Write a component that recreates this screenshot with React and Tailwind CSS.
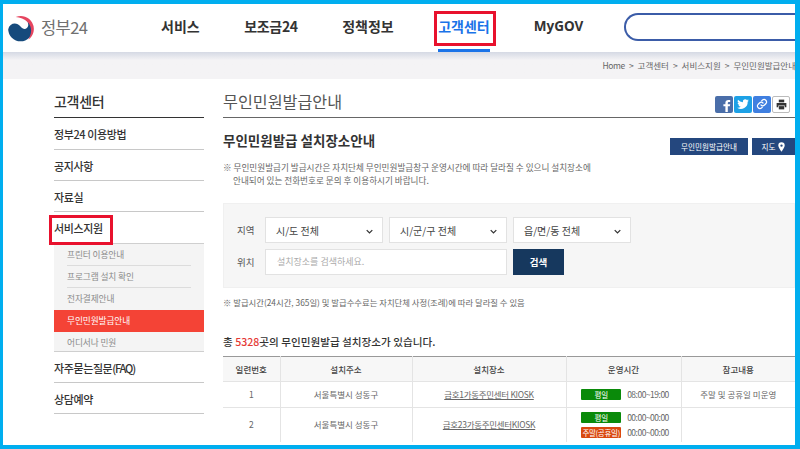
import React from "react";

const Chevron = () => (
  <svg viewBox="0 0 10 6" className="absolute right-[9px] top-[11px] w-[7px] h-[5px]" fill="none" stroke="#333" strokeWidth="1.8"><path d="M1 1l4 4 4-4" /></svg>
);
function Sel({ label, w }) {
  return (
    <div className={`relative ${w} h-[26px] bg-white border border-[#e2e2e2] flex items-center pl-[10px] text-[10px] text-[#444]`}>
      {label}
      <Chevron />
    </div>
  );
}
function Side({ label, line = true, cls = "h-[31px]" }) {
  return (
    <div className={`${cls} flex items-center pt-[2px] text-[11px] font-medium tracking-[-0.4px] text-[#333] ${line ? "border-b border-[#c8c8c8]" : ""}`}>{label}</div>
  );
}
function Sub({ label, active, line }) {
  return (
    <div className={`h-[22px] flex items-center text-[8.700px] tracking-[-0.1px] ${active ? "bg-[#f44336] text-white pl-[13px]" : "text-[#8a8a8a] mx-[13px]"} ${line ? "border-b border-[#dcdcdc]" : ""}`}>{label}</div>
  );
}
function Badge({ label, c }) {
  return <span className={`w-[40px] h-[11px] flex items-center justify-center rounded-[1px] text-[7.500px] text-white tracking-[-0.3px] ${c}`}>{label}</span>;
}
function Time({ label, c, t }) {
  return (
    <div className="flex items-center justify-center gap-[6px] pl-[3px]">
      <Badge label={label} c={c} />
      <span className="text-[8.500px] tracking-[-0.5px] text-[#666]">{t}</span>
    </div>
  );
}

export default function App() {
  return (
    <div className="relative w-[800px] h-[449px] overflow-hidden bg-white" style={{ fontFamily: '"Noto Sans CJK KR","Noto Sans",sans-serif' }}>
      {/* header */}
      <header className="h-[52px] bg-white flex items-center pl-[8px] relative">
        <svg viewBox="0 0 28 28" className="w-[27px] h-[27px] mt-[4px] shrink-0">
          <circle cx="13" cy="14.500" r="12.800" fill="#164a7c" />
          <path d="M0 15C2 8 9 7 13 12C15.500 15.500 20 15.500 21 11C21.500 6 17 2 13 1L0 0Z" fill="#fff" />
          <path d="M8 2.200A13.400 13.400 0 0 1 21 25.500C25 19 25 12 20.500 7.500C17 4 12.500 2.500 8 2.200Z" fill="#e6455f" />
        </svg>
        <span className="w-[46px] text-[16.500px] text-[#707070] ml-[6px] tracking-[-0.6px] mt-[2px] whitespace-nowrap shrink-0">정부24</span>
        <nav className="flex items-center text-[14px] font-bold text-[#333] h-full shrink-0">
          <span className="ml-[74px] w-[38px] text-center whitespace-nowrap">서비스</span>
          <span className="ml-[45px] w-[54px] text-center whitespace-nowrap tracking-[-0.3px]">보조금24</span>
          <span className="ml-[44px] w-[52px] text-center whitespace-nowrap">정책정보</span>
          <span className="ml-[44px] w-[52px] h-full flex items-center justify-center whitespace-nowrap text-[#1a73e8] border-b-[3px] border-[#1a73e8] pt-[3px]">고객센터</span>
          <span className="ml-[45px] w-[47px] flex justify-center whitespace-nowrap text-[13.500px]" style={{ fontFamily: '"Noto Sans",sans-serif' }}>MyGOV</span>
        </nav>
        <div className="ml-[42px] w-[200px] h-[28px] mt-[1px] border-2 border-r-0 border-[#3b5ca8] rounded-l-[14px] shrink-0" />
      </header>
      {/* breadcrumb */}
      <div className="h-[27px] flex items-center justify-end pr-[4px] text-[8.500px] text-[#666] whitespace-nowrap bg-gradient-to-b from-[#d5d9e4] via-[#f4f3f5] via-30% to-[#f4f3f5]">
        <span className="tracking-[-0.4px]">Home</span><span className="mx-[4px]">&gt;</span><span>고객센터</span><span className="mx-[4px]">&gt;</span><span>서비스지원</span><span className="mx-[4px]">&gt;</span><span>무인민원발급안내</span>
      </div>
      <div className="flex pl-[54px]">
        {/* sidebar */}
        <aside className="w-[150px] shrink-0">
          <div className="h-[39px] border-b border-[#333] flex items-center text-[14px] font-medium tracking-[-0.3px] text-[#333] pt-[6px]">고객센터</div>
          <Side label="정부24 이용방법" cls="h-[32px]" />
          <Side label="공지사항" />
          <Side label="자료실" />
          <Side label="서비스지원" cls="h-[31px]" line={false} />
          <div className="bg-[#f4f4f4] border-t border-b border-[#cfcfcf] h-[109px]">
            <Sub label="프린터 이용안내" line />
            <Sub label="프로그램 설치 확인" line />
            <Sub label="전자결제안내" />
            <Sub label="무인민원발급안내" active />
            <Sub label="어디서나 민원" />
          </div>
          <Side label={<>자주묻는질문<span className="tracking-[-1.200px]">(FAQ)</span></>} />
          <Side label="상담예약" />
        </aside>
        {/* main */}
        <main className="ml-[19px] w-[572px] shrink-0">
          <div className="h-[39px] border-b border-[#666] flex items-center justify-between pt-[6px] pr-[5px] text-[16.200px] text-[#555]">
            <span>무인민원발급안내</span>
            <div className="flex gap-[1px] mt-[6px]">
              <span className="w-[18px] h-[17px] rounded-[2px] bg-[#4a6ea9] flex items-end justify-end pr-[2px] text-white">
                <svg viewBox="0 0 10 16" className="w-[8px] h-[15px]" fill="#fff"><path d="M3 16V9H0.500V6.500H3V4.500C3 2 4.500 1 6.500 1H9V3.500H7.500C6.500 3.500 6 4 6 5V6.500H9L8.500 9H6V16z" /></svg>
              </span>
              <span className="w-[18px] h-[17px] rounded-[2px] bg-[#1da1e6] flex items-center justify-center">
                <svg viewBox="0 0 24 24" className="w-[14px] h-[14px]" fill="#fff"><path d="M22 5.900c-.7.3-1.500.5-2.400.6.900-.5 1.500-1.300 1.800-2.300-.8.5-1.700.8-2.600 1a4.100 4.100 0 0 0-7 3.700A11.600 11.600 0 0 1 3.400 4.700a4.100 4.100 0 0 0 1.300 5.500c-.7 0-1.300-.2-1.900-.5 0 2 1.400 3.700 3.300 4.100-.6.200-1.200.2-1.800.1.500 1.600 2 2.800 3.800 2.800A8.200 8.200 0 0 1 2 18.400 11.600 11.600 0 0 0 20 8.100c.8-.6 1.500-1.300 2-2.200z" /></svg>
              </span>
              <span className="w-[18px] h-[17px] rounded-[2px] bg-[#3f7fe0] flex items-center justify-center">
                <svg viewBox="0 0 24 24" className="w-[12px] h-[12px]" fill="none" stroke="#fff" strokeWidth="2.400" strokeLinecap="round"><path d="M10 14a5 5 0 0 0 7 0l3-3a5 5 0 0 0-7-7l-1.500 1.500" /><path d="M14 10a5 5 0 0 0-7 0l-3 3a5 5 0 0 0 7 7l1.500-1.500" /></svg>
              </span>
              <span className="w-[18px] h-[17px] rounded-[2px] bg-white border border-[#bbb] flex items-center justify-center">
                <svg viewBox="0 0 24 24" className="w-[13px] h-[13px]" fill="#333"><path d="M7 3h10v5H7z" /><path d="M3 9h18v8h-3v-3H6v3H3z" /><path d="M7 15h10v6H7z" /></svg>
              </span>
            </div>
          </div>
          <div className="flex items-start justify-between pt-[12px] h-[36px]">
            <h2 className="text-[13.500px] font-bold text-[#333] leading-[20px]">무인민원발급 설치장소안내</h2>
            <div className="flex gap-[4px] pt-[8px] text-[7.600px] text-white">
              <span className="w-[78px] h-[17px] bg-[#24477e] flex items-center justify-center">무인민원발급안내</span>
              <span className="w-[43px] h-[17px] bg-[#24477e] flex items-center justify-center gap-[3px]">지도
                <svg viewBox="0 0 12 16" className="w-[7px] h-[10px]" fill="#fff"><path fillRule="evenodd" d="M6 0a5.500 5.500 0 0 0-5.500 5.500C.5 9 6 16 6 16s5.500-7 5.500-10.500A5.500 5.500 0 0 0 6 0zm0 3.500a2 2 0 1 1 0 4 2 2 0 0 1 0-4z" /></svg>
              </span>
            </div>
          </div>
          <p className="text-[8.600px] leading-[13px] text-[#666] whitespace-nowrap mt-[7px]">
            ※ 무인민원발급기 발급시간은 자치단체 무인민원발급창구 운영시간에 따라 달라질 수 있으니 설치장소에<br />
            <span className="pl-[10px]">안내되어 있는 전화번호로 문의 후 이용하시기 바랍니다.</span>
          </p>
          <div className="mt-[16px] h-[85px] bg-[#f6f6f6] border border-[#f0f0f0] pl-[13px] pt-[13px] flex flex-col gap-[6px]">
            <div className="flex items-center">
              <span className="w-[28px] text-[9.500px] text-[#555]">지역</span>
              <div className="flex gap-[6px]">
                <Sel label="시/도 전체" w="w-[118px]" />
                <Sel label="시/군/구 전체" w="w-[118px]" />
                <Sel label="읍/면/동 전체" w="w-[118px]" />
              </div>
            </div>
            <div className="flex items-center">
              <span className="w-[28px] text-[9.500px] text-[#555]">위치</span>
              <div className="w-[242px] h-[26px] bg-white border border-[#e2e2e2] flex items-center pl-[11px] text-[9px] text-[#aaa]">설치장소를 검색하세요.</div>
              <button className="ml-[6px] w-[51px] h-[26px] bg-[#16385e] text-white text-[9.500px] font-bold">검색</button>
            </div>
          </div>
          <p className="mt-[8px] text-[8.350px] leading-[12px] text-[#666] whitespace-nowrap">※ 발급시간(24시간, 365일) 및 발급수수료는 자치단체 사정(조례)에 따라 달라질 수 있음</p>
          <p className="mt-[27px] text-[10.600px] font-medium leading-[14px] text-[#333] whitespace-nowrap">총 <span className="text-[#e53935]">5328</span>곳의 무인민원발급 설치장소가 있습니다.</p>
          <table className="mt-[7px] w-[572px] table-fixed border-t border-[#999] text-[8.500px] text-[#666] text-center">
            <colgroup>
              <col className="w-[57px]" /><col className="w-[132px]" /><col className="w-[154px]" /><col className="w-[115px]" /><col className="w-[114px]" />
            </colgroup>
            <thead>
              <tr className="h-[25px] bg-[#f7f7f7] border-b border-[#e4e4e4] text-[#444] font-medium">
                <th className="font-medium border-r border-[#e4e4e4]">일련번호</th>
                <th className="font-medium border-r border-[#e4e4e4]">설치주소</th>
                <th className="font-medium border-r border-[#e4e4e4]">설치장소</th>
                <th className="font-medium border-r border-[#e4e4e4]">운영시간</th>
                <th className="font-medium">참고내용</th>
              </tr>
            </thead>
            <tbody>
              <tr className="h-[26px] border-b border-[#e4e4e4]">
                <td className="border-r border-[#e4e4e4]">1</td>
                <td className="border-r border-[#e4e4e4]">서울특별시 성동구</td>
                <td className="border-r border-[#e4e4e4] underline tracking-[-0.3px]">금호1가동주민센터 KIOSK</td>
                <td className="border-r border-[#e4e4e4]"><Time label="평일" c="bg-[#0a8a0a]" t="08:00~19:00" /></td>
                <td>주말 및 공휴일 미운영</td>
              </tr>
              <tr className="h-[34px]">
                <td className="border-r border-[#e4e4e4]">2</td>
                <td className="border-r border-[#e4e4e4]">서울특별시 성동구</td>
                <td className="border-r border-[#e4e4e4] underline tracking-[-0.3px]">금호23가동주민센터KIOSK</td>
                <td className="border-r border-[#e4e4e4]">
                  <div className="flex flex-col gap-[2px]">
                    <Time label="평일" c="bg-[#0a8a0a]" t="00:00~00:00" />
                    <Time label="주말(공휴일)" c="bg-[#d9480f]" t="00:00~00:00" />
                  </div>
                </td>
                <td></td>
              </tr>
            </tbody>
          </table>
        </main>
      </div>
      {/* annotation overlays */}
      <div className="absolute left-[434px] top-[11px] w-[62px] h-[35px] border-[3px] border-[#e8112d] pointer-events-none" />
      <div className="absolute left-[49px] top-[215px] w-[64px] h-[30px] border-[3px] border-[#e8112d] pointer-events-none" />
      <div className="absolute inset-0 border-t-[4px] border-l-[3px] border-r-[5px] border-b-[4px] border-[#00aeef] pointer-events-none" />
    </div>
  );
}
